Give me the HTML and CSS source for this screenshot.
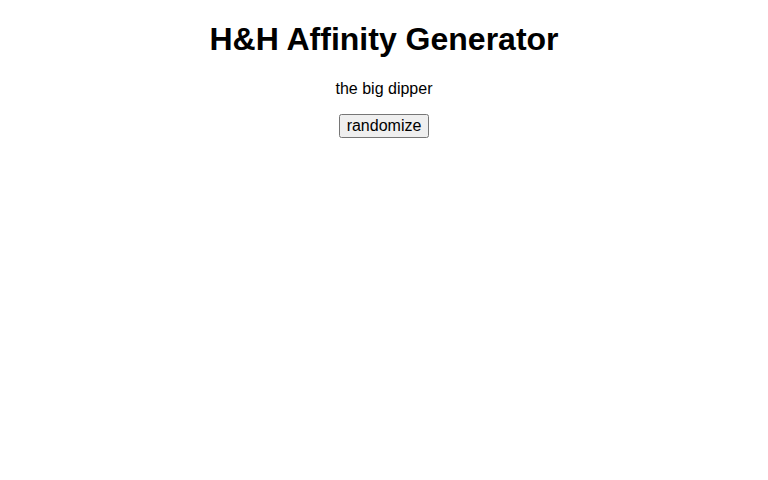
FILE: index.html
```html
<!DOCTYPE html>
<html lang="en">
<head>
<meta charset="utf-8">
<title>H&amp;H Affinity Generator</title>
<link rel="stylesheet" href="styles.css">
</head>
<body>
<main class="app">
  <h1 class="title">H&amp;H Affinity Generator</h1>
  <p class="result">the big dipper</p>
  <div class="controls">
    <button class="btn" type="button">randomize</button>
  </div>
</main>
</body>
</html>
```
FILE: styles.css
```css
body {
  margin: 0;
  background: #fff;
  color: #000;
  font-family: "Liberation Sans", Arial, sans-serif;
}

.app {
  text-align: center;
}

.title {
  font-size: 32px;
  font-weight: bold;
  margin: 21.44px 0;
}

.result {
  font-size: 16px;
  margin: 16px 0;
}

.btn {
  font-family: "Liberation Sans", Arial, sans-serif;
  font-size: 16px;
}
```
